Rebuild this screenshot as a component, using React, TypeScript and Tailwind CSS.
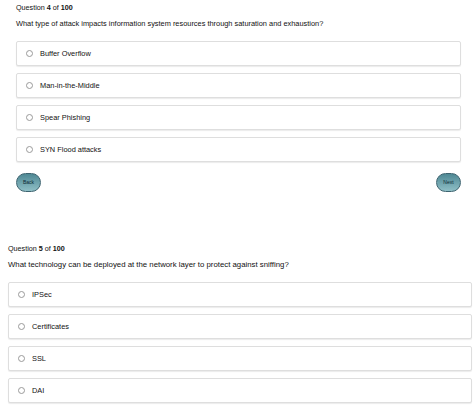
import React from 'react';

interface QuestionProps {
    num: number;
    text: string;
    options: string[];
    textSize: string;
}

const Radio = () => (
    <span className="w-[7px] h-[7px] rounded-full border border-[#9a9a9a] bg-white shrink-0" />
);

const Question: React.FC<QuestionProps> = ({ num, text, options, textSize }) => (
    <div>
        <div className="h-[16px] flex items-center text-[7.2px] text-[#111]">
            Question&nbsp;<b>{num}</b>&nbsp;of&nbsp;<b>100</b>
        </div>
        <div className={`h-[16px] flex items-center text-[#111] ${textSize}`}>{text}</div>
        <div className="flex flex-col gap-[7px] mt-[9px]">
            {options.map((o) => (
                <div key={o} className="h-[25px] flex items-center gap-[7px] pl-[9px] bg-white border border-[#dedede] rounded-[2px] shadow-[0_1px_1px_rgba(0,0,0,0.08)] text-[7.4px] text-[#111]">
                    <Radio />
                    <span>{o}</span>
                </div>
            ))}
        </div>
    </div>
);

const NavButton = ({ label }: { label: string }) => (
    <button className="w-[25px] h-[19px] rounded-full border border-[#3d6470] bg-gradient-to-b from-[#4e8894] to-[#8fbfc6] text-[5px] text-[#0c2a33] flex items-center justify-center">
        {label}
    </button>
);

export default function App() {
    return (
        <div className="w-[474px] h-[418px] bg-white overflow-hidden" style={{ fontFamily: '"Liberation Sans", Arial, sans-serif' }}>
            <div className="pl-[16px] pr-[13px]">
                <Question
                    num={4}
                    textSize="text-[7.4px]"
                    text="What type of attack impacts information system resources through saturation and exhaustion?"
                    options={['Buffer Overflow', 'Man-in-the-Middle', 'Spear Phishing', 'SYN Flood attacks']}
                />
                <div className="flex justify-between mt-[11px]">
                    <NavButton label="Back" />
                    <NavButton label="Next" />
                </div>
            </div>
            <div className="mt-[49px] pl-[8px] pr-[2px]">
                <Question
                    num={5}
                    textSize="text-[7.8px]"
                    text="What technology can be deployed at the network layer to protect against sniffing?"
                    options={['IPSec', 'Certificates', 'SSL', 'DAI']}
                />
            </div>
        </div>
    );
}
